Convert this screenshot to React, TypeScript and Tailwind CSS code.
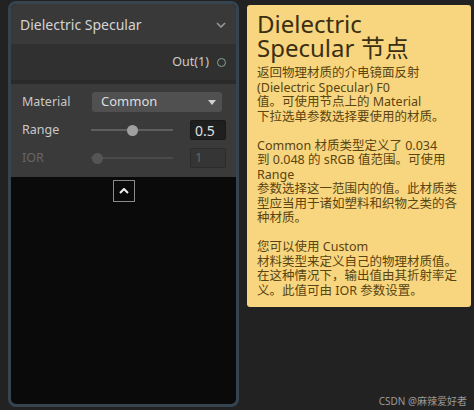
import React from "react";

const cjk = { fontFamily: '"Noto Sans", "Noto Sans CJK SC", sans-serif' };

function Slider({ pos, disabled }: { pos: number; disabled?: boolean }) {
  return (
    <div className="relative w-[82px] h-[20px] flex items-center">
      <div className={`w-full h-[2px] ${disabled ? "bg-[#4a4a4a]" : "bg-[#5e5e5e]"}`} />
      <div
        className={`absolute w-[11px] h-[11px] rounded-full ${disabled ? "bg-[#555555]" : "bg-[#a0a0a0]"}`}
        style={{ left: pos - 5.5, top: 4.5 }}
      />
    </div>
  );
}

export default function App() {
  const body: (string | null)[] = [
    "返回物理材质的介电镜面反射",
    "(Dielectric Specular) F0",
    "值。可使用节点上的 Material",
    "下拉选单参数选择要使用的材质。",
    null,
    "Common 材质类型定义了 0.034",
    "到 0.048 的 sRGB 值范围。可使用",
    "Range",
    "参数选择这一范围内的值。此材质类",
    "型应当用于诸如塑料和织物之类的各",
    "种材质。",
    null,
    "您可以使用 Custom",
    "材料类型来定义自己的物理材质值。",
    "在这种情况下，输出值由其折射率定",
    "义。此值可由 IOR 参数设置。",
  ];
  return (
    <div className="w-[474px] h-[410px] bg-[#222222] flex items-start overflow-hidden relative" style={cjk}>
      {/* Node */}
      <div className="ml-[8px] mt-[1px] w-[231px] h-[406px] border-[3px] border-[#35444f] rounded-[8px] overflow-hidden flex flex-col bg-[#0a0a0a]">
        <div className="h-[40px] bg-[#393939] flex items-center justify-between pl-[9px] pr-[10px] shrink-0">
          <span className="text-[14px] text-[#d4d4d4]">Dielectric Specular</span>
          <svg width="10" height="6" viewBox="0 0 10 6" className="mt-[2px]">
            <path d="M1 1 L5 5 L9 1" stroke="#9a9a9a" strokeWidth="1.5" fill="none" />
          </svg>
        </div>
        <div className="h-[36px] bg-[#303030] flex items-center justify-end pr-[10px] gap-[8px] shrink-0">
          <span className="text-[12.5px] text-[#cccccc]">Out(1)</span>
          <div className="w-[9px] h-[9px] rounded-full border-[1.5px] border-[#86a58f]" />
        </div>
        <div className="h-[4px] bg-[#2a2a2a] shrink-0" />
        <div className="h-[93px] bg-[#3a3a3a] flex flex-col gap-[8px] pt-[8px] pl-[11px] pr-[10px] shrink-0">
          <div className="h-[20px] flex items-center">
            <span className="w-[70px] text-[12.5px] text-[#c8c8c8]">Material</span>
            <div className="w-[130px] h-[20px] rounded-[3px] bg-[#505050] flex items-center justify-between pl-[9px] pr-[6px]">
              <span className="text-[13px] text-[#dedede]">Common</span>
              <svg width="8" height="5" viewBox="0 0 8 5">
                <path d="M0 0 L8 0 L4 5 Z" fill="#d0d0d0" />
              </svg>
            </div>
          </div>
          <div className="h-[20px] flex items-center">
            <span className="w-[69px] text-[12.5px] text-[#c8c8c8]">Range</span>
            <Slider pos={41} />
            <div className="ml-auto w-[36px] h-[20px] bg-[#1f1f1f] border border-[#191919] rounded-[2px] flex items-center pl-[4px]">
              <span className="text-[14px] text-[#e0e0e0]">0.5</span>
            </div>
          </div>
          <div className="h-[20px] flex items-center">
            <span className="w-[69px] text-[12.5px] text-[#666666]">IOR</span>
            <Slider pos={6} disabled />
            <div className="ml-auto w-[36px] h-[20px] bg-[#353535] border border-[#2c2c2c] rounded-[2px] flex items-center pl-[4px]">
              <span className="text-[13px] text-[#666666]">1</span>
            </div>
          </div>
        </div>
        <div className="flex justify-center pt-[3px]">
          <div className="w-[22px] h-[22px] border border-[#8a8a8a] bg-[#0a0a0a] flex items-center justify-center">
            <svg width="10" height="6" viewBox="0 0 10 6">
              <path d="M1 5 L5 1 L9 5" stroke="#f0f0f0" strokeWidth="2" fill="none" />
            </svg>
          </div>
        </div>
      </div>

      {/* Info panel */}
      <div className="ml-[8px] mt-[5px] w-[224px] h-[302px] bg-[#f7d67f] rounded-[3px] pl-[10px] pt-[7px]">
        <div className="text-[24px] leading-[24px] text-[#3a2f12]">
          <div>Dielectric</div>
          <div>Specular 节点</div>
        </div>
        <div className="mt-[6px] text-[12.5px] leading-[14.5px] text-[#5a4410]">
          {body.map((l, i) => (
            <div key={i} className="whitespace-nowrap h-[14.5px]">
              {l ?? "\u00a0"}
            </div>
          ))}
        </div>
      </div>

      <div className="absolute right-[7px] bottom-[1px] text-[10px] text-[#9a9a9a]">CSDN @麻辣爱好者</div>
    </div>
  );
}
